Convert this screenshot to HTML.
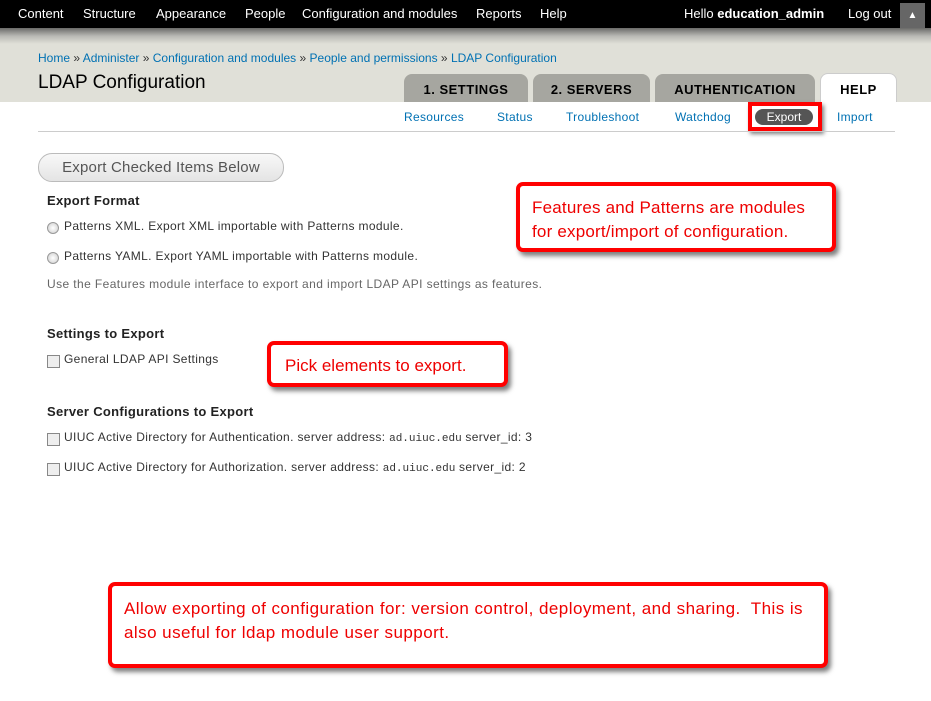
<!DOCTYPE html><html><head><style>
body{margin:0;width:931px;height:701px;background:#fff;font-family:"Liberation Sans",sans-serif;position:relative;overflow:hidden}
.a{position:absolute;white-space:nowrap}
#top{position:absolute;left:0;top:0;width:931px;height:28px;background:#000;color:#fff;font-size:13px}
#hd{position:absolute;left:0;top:28px;width:931px;height:74px;background:linear-gradient(#6a6a68 0,#b8b8b4 8px,#e0e0d8 16px,#e0e0d8 100%)}
.lnk{color:#0071b3}
.tab{position:absolute;top:74px;height:28px;background:#a6a6a0;border-radius:8px 8px 0 0;font-weight:bold;font-size:13px;text-align:center;line-height:32px;color:#000;letter-spacing:.5px}
.call{position:absolute;border:4px solid #f00;border-radius:7px;box-shadow:3px 4px 5px rgba(0,0,0,.5);background:#fff;color:#e00;font-size:17px;line-height:24px;box-sizing:border-box}
.rad{position:absolute;width:10px;height:10px;border-radius:50%;border:1px solid #999;background:radial-gradient(#fff,#ccc)}
.chk{position:absolute;width:11px;height:11px;border:1px solid #888;background:#eee}
.f{font-size:12px;color:#333;letter-spacing:.35px}
h4{margin:0;font-size:13px;color:#222;position:absolute;letter-spacing:.3px}
</style></head><body>
<div id="top">
<span class="a" style="left:18px;top:6px">Content</span>
<span class="a" style="left:83px;top:6px">Structure</span>
<span class="a" style="left:156px;top:6px">Appearance</span>
<span class="a" style="left:245px;top:6px">People</span>
<span class="a" style="left:302px;top:6px">Configuration and modules</span>
<span class="a" style="left:476px;top:6px">Reports</span>
<span class="a" style="left:540px;top:6px">Help</span>
<span class="a" style="left:684px;top:6px">Hello <b>education_admin</b></span>
<span class="a" style="left:848px;top:6px">Log out</span>
<div class="a" style="left:900px;top:3px;width:25px;height:25px;background:#666;color:#fff;font-size:10px;text-align:center;line-height:25px">▲</div>
</div>
<div id="hd"></div>
<div class="a lnk" style="left:38px;top:51px;font-size:12px"><span>Home</span><span style="color:#333"> » </span>Administer<span style="color:#333"> » </span>Configuration and modules<span style="color:#333"> » </span>People and permissions<span style="color:#333"> » </span>LDAP Configuration</div>
<div class="a" style="left:38px;top:72px;font-size:19px;color:#000">LDAP Configuration</div>
<div class="tab" style="left:404px;width:124px">1. SETTINGS</div>
<div class="tab" style="left:533px;width:117px">2. SERVERS</div>
<div class="tab" style="left:655px;width:160px">AUTHENTICATION</div>
<div class="tab" style="left:820px;width:75px;background:#fff;border:1px solid #ccc;border-bottom:none;top:73px">HELP</div>
<div class="a lnk" style="left:404px;top:110px;font-size:12px;letter-spacing:.3px">Resources</div>
<div class="a lnk" style="left:497px;top:110px;font-size:12px;letter-spacing:.3px">Status</div>
<div class="a lnk" style="left:566px;top:110px;font-size:12px;letter-spacing:.3px">Troubleshoot</div>
<div class="a lnk" style="left:675px;top:110px;font-size:12px;letter-spacing:.3px">Watchdog</div>
<div class="a lnk" style="left:837px;top:110px;font-size:12px;letter-spacing:.3px">Import</div>
<div class="a" style="left:748px;top:102px;width:74px;height:29px;border:4px solid #f00;box-sizing:border-box;box-shadow:2px 3px 4px rgba(0,0,0,.5)"></div>
<div class="a" style="left:755px;top:109px;width:58px;height:16px;border-radius:8px;background:#555;color:#fff;font-size:12px;text-align:center;line-height:16px">Export</div>
<div class="a" style="left:38px;top:131px;width:857px;height:1px;background:#ccc"></div>
<div class="a" style="left:38px;top:153px;width:244px;height:27px;border:1px solid #bbb;border-radius:14px;background:linear-gradient(#f8f8f8,#e4e4e4);font-size:15px;color:#555;text-align:center;line-height:27px;letter-spacing:.2px">Export Checked Items Below</div>
<h4 style="left:47px;top:193px">Export Format</h4>
<div class="rad" style="left:47px;top:222px"></div><div class="a f" style="left:64px;top:219px">Patterns XML. Export XML importable with Patterns module.</div>
<div class="rad" style="left:47px;top:252px"></div><div class="a f" style="left:64px;top:249px">Patterns YAML. Export YAML importable with Patterns module.</div>
<div class="a" style="left:47px;top:277px;font-size:12px;color:#666;letter-spacing:.4px">Use the Features module interface to export and import LDAP API settings as features.</div>
<h4 style="left:47px;top:326px">Settings to Export</h4>
<div class="chk" style="left:47px;top:355px"></div><div class="a f" style="left:64px;top:352px">General LDAP API Settings</div>
<h4 style="left:47px;top:404px">Server Configurations to Export</h4>
<div class="chk" style="left:47px;top:433px"></div><div class="a f" style="left:64px;top:430px">UIUC Active Directory for Authentication. server address: <span style="font-family:'Liberation Mono',monospace;font-size:11px;letter-spacing:0">ad.uiuc.edu</span> server_id: 3</div>
<div class="chk" style="left:47px;top:463px"></div><div class="a f" style="left:64px;top:460px">UIUC Active Directory for Authorization. server address: <span style="font-family:'Liberation Mono',monospace;font-size:11px;letter-spacing:0">ad.uiuc.edu</span> server_id: 2</div>
<div class="call" style="left:516px;top:182px;width:320px;height:70px;padding:10px 0 0 12px;letter-spacing:.2px">Features and Patterns are modules<br>for export/import of configuration.</div>
<div class="call" style="left:267px;top:341px;width:241px;height:46px;padding:9px 0 0 14px">Pick elements to export.</div>
<div class="call" style="left:108px;top:582px;width:720px;height:86px;padding:11px 0 0 12px;letter-spacing:.45px">Allow exporting of configuration for: version control, deployment, and sharing.&nbsp; This is<br>also useful for ldap module user support.</div>
</body></html>
